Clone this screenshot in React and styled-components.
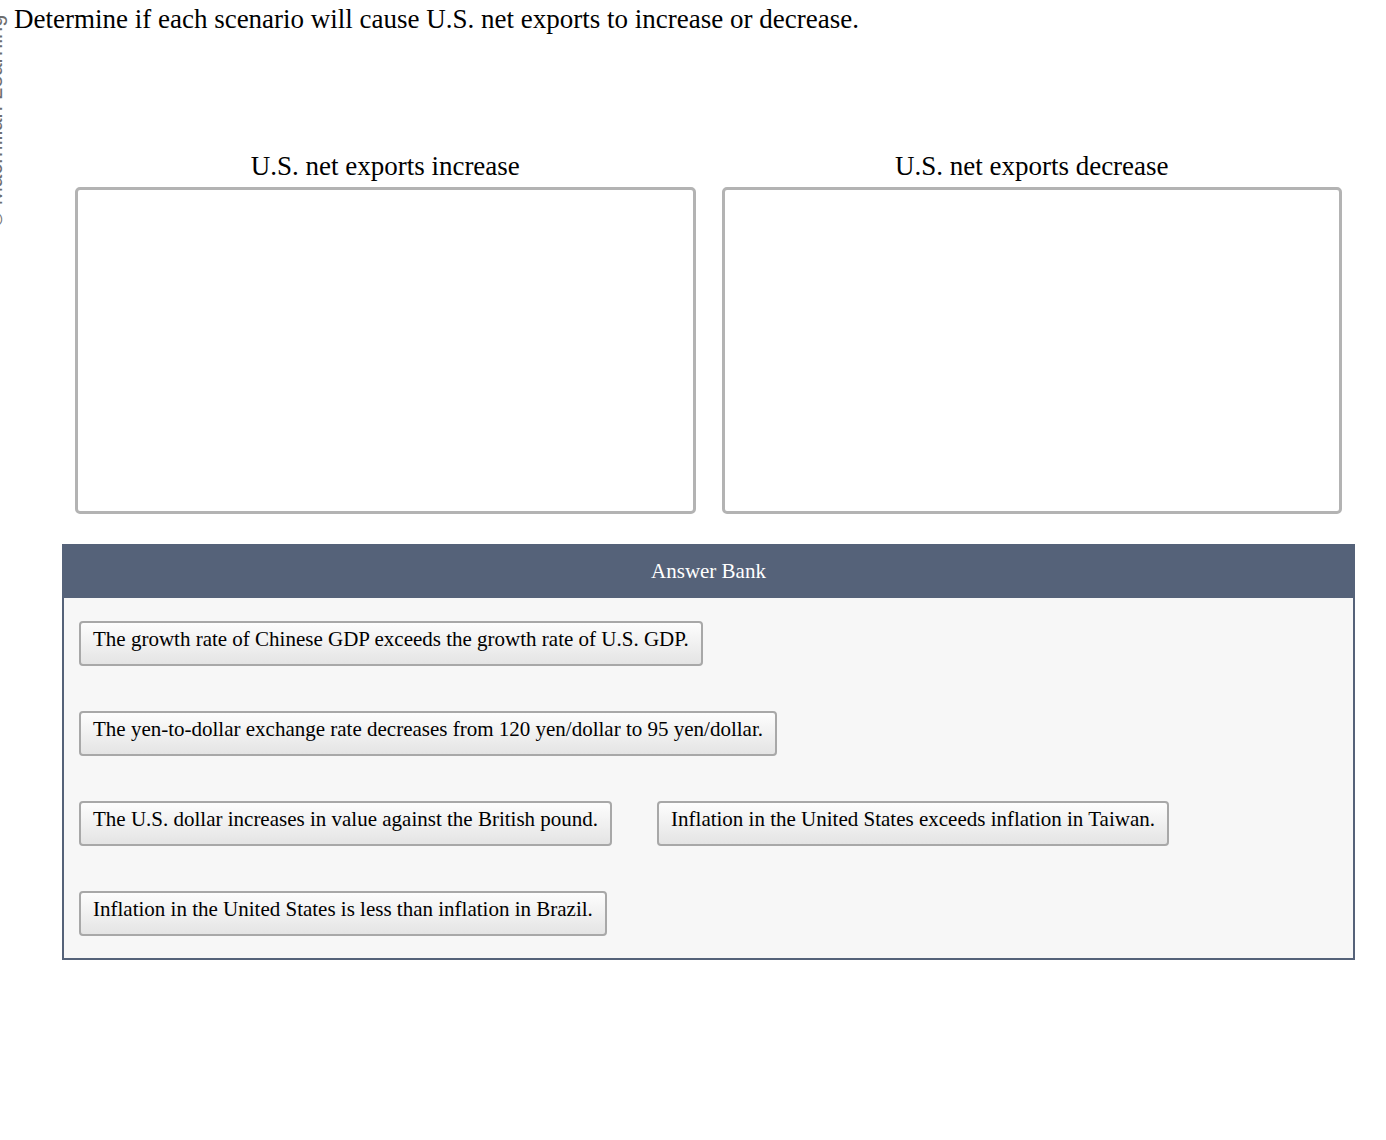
import React from 'react';
import styled, { createGlobalStyle } from 'styled-components';

const GlobalStyle = createGlobalStyle`
  html, body {
    margin: 0;
    padding: 0;
    background: #ffffff;
  }
  body {
    font-family: "Liberation Serif", "Times New Roman", serif;
    color: #000000;
  }
`;

const Page = styled.div`
  position: relative;
  width: 1386px;
  min-height: 1140px;
  overflow: hidden;
`;

// vertical copyright strip, mostly hidden past the left edge
const Copyright = styled.div`
  position: absolute;
  left: -17px;
  top: 8px;
  width: 24px;
  height: 226px;
  display: flex;
  align-items: center;
  justify-content: center;
  span {
    transform: rotate(-90deg);
    white-space: nowrap;
    font-family: "Liberation Sans", Arial, sans-serif;
    font-size: 22px;
    line-height: 24px;
    color: #6e6e6e;
  }
`;

const Prompt = styled.p`
  margin: 0;
  padding: 3px 0 0 14px;
  font-size: 27px;
  line-height: 32px;
`;

const Zones = styled.div`
  display: grid;
  grid-template-columns: 1fr 1fr;
  column-gap: 26px;
  margin: 116px 44px 0 75px;
`;

const Zone = styled.div`
  display: flex;
  flex-direction: column;
`;

const ZoneTitle = styled.div`
  text-align: center;
  font-size: 27px;
  line-height: 31px;
  margin-bottom: 5px;
`;

const DropBox = styled.div`
  height: 321px;
  border: 3px solid #b3b3b3;
  border-radius: 5px;
  background: #ffffff;
`;

const Bank = styled.section`
  margin: 30px 31px 0 62px;
  border: 2px solid #556279;
  background: #f7f7f7;
`;

const BankHeader = styled.div`
  height: 52px;
  padding-bottom: 2px;
  box-sizing: border-box;
  background: #556279;
  color: #ffffff;
  font-size: 21px;
  display: flex;
  align-items: center;
  justify-content: center;
`;

const BankBody = styled.div`
  display: flex;
  flex-direction: column;
  gap: 45px;
  padding: 23px 15px 22px;
`;

const ChipRow = styled.div`
  display: flex;
  gap: 45px;
`;

const Chip = styled.div`
  box-sizing: border-box;
  height: 45px;
  padding: 0 12px 9px;
  display: flex;
  align-items: center;
  border: 2px solid #a8a8a8;
  border-radius: 4px;
  background: linear-gradient(#fdfdfd, #e4e4e4);
  font-size: 21px;
  line-height: 24px;
  white-space: nowrap;
`;

const rows = [
  ['The growth rate of Chinese GDP exceeds the growth rate of U.S. GDP.'],
  ['The yen-to-dollar exchange rate decreases from 120 yen/dollar to 95 yen/dollar.'],
  [
    'The U.S. dollar increases in value against the British pound.',
    'Inflation in the United States exceeds inflation in Taiwan.',
  ],
  ['Inflation in the United States is less than inflation in Brazil.'],
];

const App = () => {
  return (
    <Page>
      <GlobalStyle />
      <Copyright>
        <span>© Macmillan Learning</span>
      </Copyright>
      <Prompt>Determine if each scenario will cause U.S. net exports to increase or decrease.</Prompt>
      <Zones>
        <Zone>
          <ZoneTitle>U.S. net exports increase</ZoneTitle>
          <DropBox />
        </Zone>
        <Zone>
          <ZoneTitle>U.S. net exports decrease</ZoneTitle>
          <DropBox />
        </Zone>
      </Zones>
      <Bank>
        <BankHeader>Answer Bank</BankHeader>
        <BankBody>
          {rows.map((row, i) => (
            <ChipRow key={i}>
              {row.map((text) => (
                <Chip key={text}>{text}</Chip>
              ))}
            </ChipRow>
          ))}
        </BankBody>
      </Bank>
    </Page>
  );
};

export default App;
